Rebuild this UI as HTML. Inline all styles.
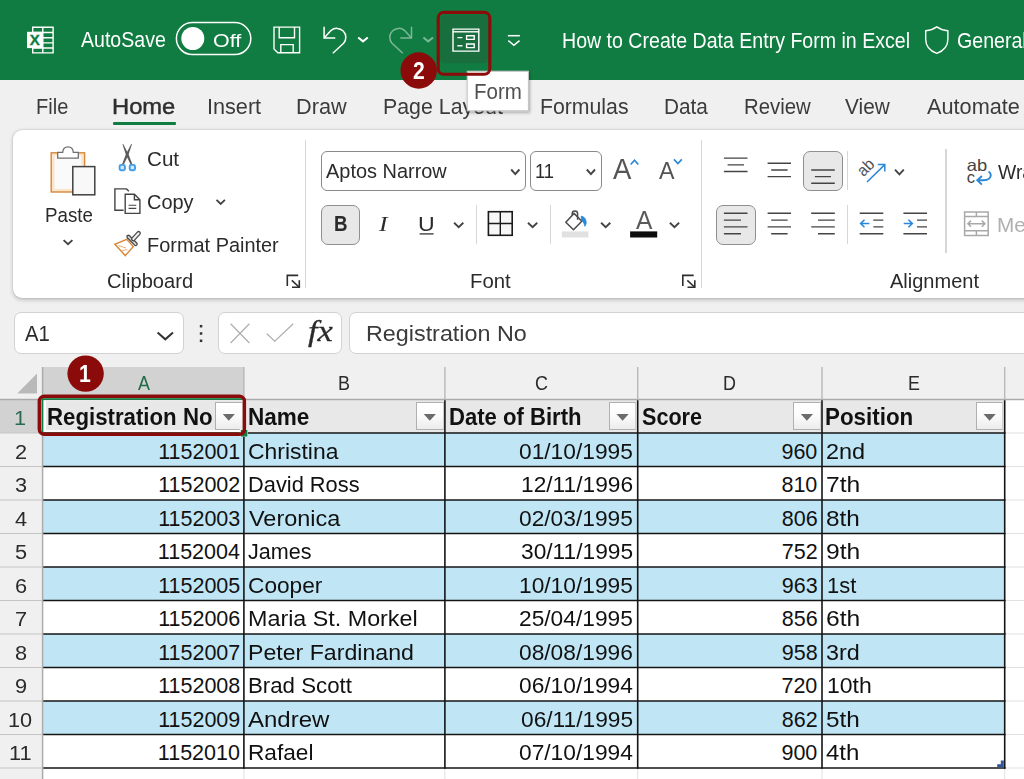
<!DOCTYPE html>
<html lang="en">
<head>
<meta charset="utf-8">
<title>How to Create Data Entry Form in Excel</title>
<style>

html,body{margin:0;padding:0;width:1024px;height:779px;overflow:hidden}
body{background:#f0f0f0;font-family:'Liberation Sans',sans-serif;}
#app{position:relative;width:1024px;height:779px;overflow:hidden;background:#f0f0f0;color:#242424}
#app div{position:absolute;box-sizing:border-box}
#app svg{position:absolute;left:0;top:0;overflow:visible}
.t{position:absolute;white-space:pre;line-height:1;transform-origin:0 0}
#titlebar{left:0;top:0;width:1024px;height:80px;background:#107c41}
#ribbon{left:13.2px;top:130px;width:1040px;height:168px;background:#fff;border-radius:9px;box-shadow:0 1.5px 4px rgba(0,0,0,.2),0 0 1.5px rgba(0,0,0,.22)}
.fbox{background:#fff;border:1.5px solid #d2d2d2;border-radius:7px}
.combo{background:#fff;border:1px solid #8a8a8a;border-radius:6px}
.pressed{background:#e8e8e8;border:1px solid #8f8f8f;border-radius:7px}
.vsep{background:#d6d6d6}
.cell{background:#fff}
.band{background:#c0e6f5}
.hcell{background:#e8e8e8}
.fbtn{border:1.3px solid #b0b0b0;border-right-color:#d0d0d0;background:linear-gradient(#ffffff 0%,#fbfbfb 50%,#ececec 100%);}

</style>
</head>
<body>
<div id="app">
<div id="titlebar"></div>
<div id="ribbon"></div>
<div style="left:112.5px;top:122.4px;width:63.3px;height:2.2px;background:#107c41;border-radius:1px"></div>
<div class="combo" style="left:320.5px;top:150.5px;width:205.5px;height:40px;"></div>
<div class="combo" style="left:530px;top:150.5px;width:71.5px;height:40px;"></div>
<div class="pressed" style="left:320.5px;top:204.5px;width:39.5px;height:40px;"></div>
<div class="pressed" style="left:715.5px;top:204.5px;width:40.5px;height:40px;"></div>
<div class="pressed" style="left:803px;top:150.5px;width:40px;height:40px;"></div>
<div class="vsep" style="left:305.1px;top:139.5px;width:1.4px;height:148.3px;"></div>
<div class="vsep" style="left:700.7px;top:139.5px;width:1.4px;height:148.3px;"></div>
<div class="vsep" style="left:475.9px;top:204.8px;width:1.3px;height:39.4px;"></div>
<div class="vsep" style="left:550px;top:204.8px;width:1.3px;height:39.4px;"></div>
<div class="vsep" style="left:846.5px;top:150.8px;width:1.3px;height:39.6px;"></div>
<div class="vsep" style="left:846.5px;top:204.8px;width:1.3px;height:39.4px;"></div>
<div class="vsep" style="left:945.3px;top:149.3px;width:1.3px;height:103.3px;"></div>
<div class="fbox" style="left:14.3px;top:312px;width:169.5px;height:42.4px;"></div>
<div class="fbox" style="left:218.3px;top:312px;width:123.3px;height:42.4px;"></div>
<div class="fbox" style="left:348.9px;top:312px;width:711.1px;height:42.4px;"></div>
<div style="left:0px;top:367px;width:1024px;height:32px;background:#f0f0f0"></div>
<div style="left:42.6px;top:367px;width:201.3px;height:32px;background:#d2d2d2"></div>
<div style="left:0px;top:399.5px;width:42.6px;height:33.5px;background:#d2d2d2"></div>
<div style="left:42.6px;top:399.5px;width:981.4px;height:379.5px;background:#fff"></div>
<div class="hcell" style="left:42.6px;top:399.5px;width:962.1px;height:33.5px;"></div>
<div style="left:43px;top:399.6px;width:201.6px;height:33.8px;background:#fff"></div>
<div style="left:45.5px;top:401.3px;width:197.1px;height:29.2px;background:#e8e8e8"></div>
<div class="band" style="left:42.6px;top:433px;width:962.1px;height:33.5px;"></div>
<div class="band" style="left:42.6px;top:500px;width:962.1px;height:33.5px;"></div>
<div class="band" style="left:42.6px;top:567px;width:962.1px;height:33.5px;"></div>
<div class="band" style="left:42.6px;top:634px;width:962.1px;height:33.5px;"></div>
<div class="band" style="left:42.6px;top:701px;width:962.1px;height:33.5px;"></div>
<div class="fbtn" style="left:215px;top:402.2px;width:27.6px;height:28.3px;"></div>
<div class="fbtn" style="left:416px;top:402.2px;width:27.6px;height:28.3px;"></div>
<div class="fbtn" style="left:608.8px;top:402.2px;width:27.6px;height:28.3px;"></div>
<div class="fbtn" style="left:793.1px;top:402.2px;width:27.6px;height:28.3px;"></div>
<div class="fbtn" style="left:975.8px;top:402.2px;width:27.6px;height:28.3px;"></div>
<svg id="ico" width="1024" height="779" viewBox="0 0 1024 779">
<line x1="1004.7" y1="399.5" x2="1024" y2="399.5" stroke="#e1e1e1" stroke-width="1" />
<line x1="1004.7" y1="433" x2="1024" y2="433" stroke="#e1e1e1" stroke-width="1" />
<line x1="1004.7" y1="466.5" x2="1024" y2="466.5" stroke="#e1e1e1" stroke-width="1" />
<line x1="1004.7" y1="500" x2="1024" y2="500" stroke="#e1e1e1" stroke-width="1" />
<line x1="1004.7" y1="533.5" x2="1024" y2="533.5" stroke="#e1e1e1" stroke-width="1" />
<line x1="1004.7" y1="567" x2="1024" y2="567" stroke="#e1e1e1" stroke-width="1" />
<line x1="1004.7" y1="600.5" x2="1024" y2="600.5" stroke="#e1e1e1" stroke-width="1" />
<line x1="1004.7" y1="634" x2="1024" y2="634" stroke="#e1e1e1" stroke-width="1" />
<line x1="1004.7" y1="667.5" x2="1024" y2="667.5" stroke="#e1e1e1" stroke-width="1" />
<line x1="1004.7" y1="701" x2="1024" y2="701" stroke="#e1e1e1" stroke-width="1" />
<line x1="1004.7" y1="734.5" x2="1024" y2="734.5" stroke="#e1e1e1" stroke-width="1" />
<line x1="1004.7" y1="768" x2="1024" y2="768" stroke="#e1e1e1" stroke-width="1" />
<line x1="1004.7" y1="768" x2="1004.7" y2="779" stroke="#e1e1e1" stroke-width="1" />
<line x1="42.6" y1="768" x2="42.6" y2="779" stroke="#e1e1e1" stroke-width="1" />
<line x1="243.9" y1="768" x2="243.9" y2="779" stroke="#e1e1e1" stroke-width="1" />
<line x1="444.9" y1="768" x2="444.9" y2="779" stroke="#e1e1e1" stroke-width="1" />
<line x1="637.7" y1="768" x2="637.7" y2="779" stroke="#e1e1e1" stroke-width="1" />
<line x1="822" y1="768" x2="822" y2="779" stroke="#e1e1e1" stroke-width="1" />
<line x1="0" y1="433" x2="42.6" y2="433" stroke="#c4c4c4" stroke-width="1.2" />
<line x1="0" y1="466.5" x2="42.6" y2="466.5" stroke="#c4c4c4" stroke-width="1.2" />
<line x1="0" y1="500" x2="42.6" y2="500" stroke="#c4c4c4" stroke-width="1.2" />
<line x1="0" y1="533.5" x2="42.6" y2="533.5" stroke="#c4c4c4" stroke-width="1.2" />
<line x1="0" y1="567" x2="42.6" y2="567" stroke="#c4c4c4" stroke-width="1.2" />
<line x1="0" y1="600.5" x2="42.6" y2="600.5" stroke="#c4c4c4" stroke-width="1.2" />
<line x1="0" y1="634" x2="42.6" y2="634" stroke="#c4c4c4" stroke-width="1.2" />
<line x1="0" y1="667.5" x2="42.6" y2="667.5" stroke="#c4c4c4" stroke-width="1.2" />
<line x1="0" y1="701" x2="42.6" y2="701" stroke="#c4c4c4" stroke-width="1.2" />
<line x1="0" y1="734.5" x2="42.6" y2="734.5" stroke="#c4c4c4" stroke-width="1.2" />
<line x1="0" y1="768" x2="42.6" y2="768" stroke="#c4c4c4" stroke-width="1.2" />
<line x1="42.6" y1="367" x2="42.6" y2="779" stroke="#ababab" stroke-width="1.5" />
<line x1="243.9" y1="367" x2="243.9" y2="399" stroke="#b8b8b8" stroke-width="1.4" />
<line x1="444.9" y1="367" x2="444.9" y2="399" stroke="#b8b8b8" stroke-width="1.4" />
<line x1="637.7" y1="367" x2="637.7" y2="399" stroke="#b8b8b8" stroke-width="1.4" />
<line x1="822" y1="367" x2="822" y2="399" stroke="#b8b8b8" stroke-width="1.4" />
<line x1="1004.7" y1="367" x2="1004.7" y2="399" stroke="#b8b8b8" stroke-width="1.4" />
<line x1="0" y1="399.5" x2="1024" y2="399.5" stroke="#aaaaaa" stroke-width="1.5" />
<line x1="43.3" y1="433" x2="1005.5" y2="433" stroke="#151515" stroke-width="1.6" />
<line x1="43.3" y1="466.5" x2="1005.5" y2="466.5" stroke="#151515" stroke-width="1.6" />
<line x1="43.3" y1="500" x2="1005.5" y2="500" stroke="#151515" stroke-width="1.6" />
<line x1="43.3" y1="533.5" x2="1005.5" y2="533.5" stroke="#151515" stroke-width="1.6" />
<line x1="43.3" y1="567" x2="1005.5" y2="567" stroke="#151515" stroke-width="1.6" />
<line x1="43.3" y1="600.5" x2="1005.5" y2="600.5" stroke="#151515" stroke-width="1.6" />
<line x1="43.3" y1="634" x2="1005.5" y2="634" stroke="#151515" stroke-width="1.6" />
<line x1="43.3" y1="667.5" x2="1005.5" y2="667.5" stroke="#151515" stroke-width="1.6" />
<line x1="43.3" y1="701" x2="1005.5" y2="701" stroke="#151515" stroke-width="1.6" />
<line x1="43.3" y1="734.5" x2="1005.5" y2="734.5" stroke="#151515" stroke-width="1.6" />
<line x1="43.3" y1="768" x2="1005.5" y2="768" stroke="#151515" stroke-width="1.6" />
<line x1="243.9" y1="400.2" x2="243.9" y2="768.8" stroke="#151515" stroke-width="1.6" />
<line x1="444.9" y1="400.2" x2="444.9" y2="768.8" stroke="#151515" stroke-width="1.6" />
<line x1="637.7" y1="400.2" x2="637.7" y2="768.8" stroke="#151515" stroke-width="1.6" />
<line x1="822" y1="400.2" x2="822" y2="768.8" stroke="#151515" stroke-width="1.6" />
<line x1="1004.7" y1="400.2" x2="1004.7" y2="768.8" stroke="#151515" stroke-width="1.6" />
<path d="M1003.8 760.6v6.6h-6.6v-3h3.6v-3.6z" fill="#2f5597"/>
<path d="M37 373.4V393.4H17.2z" fill="#b9b9b9"/>
<path d="M222.7 413.9h12.2l-6.1 6.9z" fill="#6b6b6b"/>
<path d="M423.7 413.9h12.2l-6.1 6.9z" fill="#6b6b6b"/>
<path d="M616.5 413.9h12.2l-6.1 6.9z" fill="#6b6b6b"/>
<path d="M800.8 413.9h12.2l-6.1 6.9z" fill="#6b6b6b"/>
<path d="M983.5 413.9h12.2l-6.1 6.9z" fill="#6b6b6b"/>
<rect x="440.2" y="14.6" width="48.4" height="48.6" rx="5" fill="#186f3d"/>
<g fill="none" stroke="#fff" stroke-width="1.4"><path d="M32.7 27.3h20.4v25.6H32.7z" /><path d="M42.8 27.3v25.6" /><path d="M32.7 32.5h20.4M42.8 37.7h10.3M42.8 42.9h10.3M32.7 48h20.4" /></g>
<rect x="27" y="31.8" width="15.7" height="16.3" fill="#fff"/>
<text x="34.85" y="45.1" font-family="'Liberation Sans',sans-serif" font-size="15" font-weight="700" fill="#107c41" stroke="#107c41" stroke-width="0.4" text-anchor="middle">X</text>
<rect x="176.4" y="22.5" width="74.4" height="32.1" rx="16.05" fill="none" stroke="#fff" stroke-width="1.5"/>
<circle cx="192.8" cy="38.5" r="11.5" fill="#fff"/>
<g fill="none" stroke="#fff" stroke-width="1.4"><path d="M274 27.1h25.6v25.6h-21.8l-3.8-3.8z" /><path d="M279.2 27.1v10.7h15.3V27.1" /><path d="M280.8 52.7v-8.1h12.4v8.1" /></g>
<g fill="none" stroke="#fff" stroke-width="1.5" opacity="1"><path d="M324.1 26.8V38h11.2" /><path d="M324.4 37.7L330.9 30.6A9 9 0 0 1 343.6 43.3L332.8 53.2" /></g>
<path d="M358.2 37.5L363 41.4L367.8 37.5" fill="none" stroke="#fff" stroke-width="2.0" stroke-linejoin="miter"/>
<g fill="none" stroke="#fff" stroke-width="1.5" opacity="0.45" transform="translate(735.6 0) scale(-1 1)"><path d="M324.1 26.8V38h11.2" /><path d="M324.4 37.7L330.9 30.6A9 9 0 0 1 343.6 43.3L332.8 53.2" /></g>
<path d="M423.4 37.5L428.2 41.4L433 37.5" fill="none" stroke="#fff" stroke-width="2.0" stroke-linejoin="miter" opacity="0.45"/>
<g fill="none" stroke="#fff" stroke-width="1.4"><path d="M453 29.1h25.8v22H453z" /><path d="M453 31.8h25.8" /><path d="M457.4 37.6h5M457.4 45.8h5" /><path d="M466.6 35.8h7.6v3.6h-7.6zM466.6 44h7.6v3.6h-7.6z" /></g>
<g fill="none" stroke="#fff" stroke-width="1.5"><path d="M507.9 35.7h12" /><path d="M508.3 40.6l5.6 4.7 5.6-4.7" /></g>
<g fill="none" stroke="#fff" stroke-width="1.4"><path d="M936.8 26.9c-3.4 2.5-7.1 3.6-11.1 3.9v8.4c0 7.2 4.4 11.7 11.1 14.2 6.7-2.5 11.1-7 11.1-14.2v-8.4c-4-.3-7.7-1.4-11.1-3.9z" /></g>
<rect x="51.2" y="152.8" width="33.4" height="39.2" fill="#fbe5cb" stroke="#d8873a" stroke-width="1.4"/>
<rect x="54.6" y="156" width="26.6" height="32.8" fill="#fafafa"/>
<path d="M57.7 158.1v-5.7h5c.2-3.4 2.300-5.500 5.300-5.500s5.100 2.100 5.300 5.500h5v5.700z" fill="#fff" stroke="#707070" stroke-width="1.3"/>
<rect x="72.8" y="166.6" width="22" height="28.2" fill="#f8f8f8" stroke="#404040" stroke-width="1.5"/>
<path d="M63.6 240.1L68 244.1L72.4 240.1" fill="none" stroke="#444" stroke-width="1.9" stroke-linejoin="miter"/>
<path d="M123.17 144.04L128.39 153.89L132.34 164.28L130.86 164.92L126.01 154.91L122.43 144.36z" fill="#5a5a5a"/><path d="M131.23 144.04L126.01 153.89L122.06 164.28L123.54 164.92L128.39 154.91L131.97 144.36z" fill="#5a5a5a"/>
<rect x="119.6" y="164.9" width="5.300" height="5.300" rx="1.500" fill="#d3e8f9" stroke="#419de6" stroke-width="1.900"/>
<rect x="129.700" y="164.9" width="5.300" height="5.300" rx="1.500" fill="#d3e8f9" stroke="#419de6" stroke-width="1.900"/>
<g fill="none" stroke="#444" stroke-width="1.4"><path d="M123.6 210.2h-8.700V188.9h11.6l2.400 2.400" /><path d="M125.2 194.2h9.2l5.500 5.500v13.700h-14.700z" fill="#fff"/><path d="M134.400 194.2v5.500h5.500" /><path d="M128.600 205.3h7.700M128.600 208.4h7.700" stroke-width="1.1"/></g>
<path d="M216.5 199.9L220.7 204L224.9 199.9" fill="none" stroke="#444" stroke-width="1.9" stroke-linejoin="miter"/>
<g ><path d="M126.7 239.3l-11.900 5 10.500 11.300 8-9.200z" fill="#fff" stroke="#d8873a" stroke-width="1.4"/><path d="M118.500 245.5l7.500 2.600M121.900 250.800l5.500-1.300" fill="none" stroke="#e9b585" stroke-width="1.1"/><path d="M128.400 236.8l7.300 7.300" fill="none" stroke="#4a4a4a" stroke-width="4.2" stroke-linecap="round"/><path d="M128.400 236.8l7.300 7.300" fill="none" stroke="#d9d9d9" stroke-width="1.6" stroke-linecap="round"/><path d="M133.300 239l5.300-5.700" fill="none" stroke="#4a4a4a" stroke-width="4.600" stroke-linecap="round"/><path d="M133.300 239l5.300-5.700" fill="none" stroke="#f2f2f2" stroke-width="2" stroke-linecap="round"/></g>
<g fill="none" stroke="#2e2e2e" stroke-width="1.6"><path d="M298.2 275.4H287.3V286" /><path d="M291.8 280.4L299 287" /><path d="M299.3 280.2V287.2H292" /></g>
<g fill="none" stroke="#2e2e2e" stroke-width="1.6"><path d="M693.7 275.4H682.8V286" /><path d="M687.3 280.4L694.5 287" /><path d="M694.8 280.2V287.2H687.5" /></g>
<path d="M511.2 169.5L515.3 174.1L519.4 169.5" fill="none" stroke="#444" stroke-width="1.9" stroke-linejoin="miter"/>
<path d="M586.8 169.5L590.9 174.1L595 169.5" fill="none" stroke="#444" stroke-width="1.9" stroke-linejoin="miter"/>
<path d="M454.1 222.7L458.7 227.1L463.3 222.7" fill="none" stroke="#444" stroke-width="1.9" stroke-linejoin="miter"/>
<path d="M528 222.7L532.6 227.1L537.2 222.7" fill="none" stroke="#444" stroke-width="1.9" stroke-linejoin="miter"/>
<path d="M601.1 222.7L605.7 227.1L610.3 222.7" fill="none" stroke="#444" stroke-width="1.9" stroke-linejoin="miter"/>
<path d="M669.9 222.7L674.5 227.1L679.1 222.7" fill="none" stroke="#444" stroke-width="1.9" stroke-linejoin="miter"/>
<rect x="419.6" y="233.2" width="14" height="1.4" fill="#444"/>
<rect x="488.4" y="211.7" width="23.8" height="23.6" fill="#f7f7f7" stroke="#1a1a1a" stroke-width="1.6"/>
<path d="M500.3 211.7v23.600M488.400 223.5h23.800" fill="none" stroke="#1a1a1a" stroke-width="1.4"/>
<path d="M630.7 164.5l3.800-4.200 3.800 4.200" fill="none" stroke="#2b88d8" stroke-width="1.7"/>
<path d="M674 159.3l3.900 4.200 3.900-4.200" fill="none" stroke="#2b88d8" stroke-width="1.7"/>
<rect x="561.8" y="231.4" width="26.6" height="6.1" fill="#e1e1e1"/>
<g fill="none" stroke="#4a4a4a" stroke-width="1.5" stroke-linejoin="round"><path d="M565.8 222.3L573.5 229.8L581.8 221.3L574 213.4Z" fill="#fff"/><path d="M572.2 215.2v-1.600c0-1.700 1.200-2.700 2.700-2.700s2.700 1 2.700 2.700v6.200" /></g>
<path d="M581.2 216.100c2.700.500 4.500 2.500 4.900 5.200.3 2-.200 3.600-1.300 5-.400-2.700-1.500-4.700-3.400-6.100z" fill="#2b88d8" stroke="#2b88d8" stroke-width=".8" stroke-linejoin="round"/>
<rect x="630.1" y="231.4" width="27.1" height="6.1" fill="#0d0d0d"/>
<path d="M723.9 158.1H747.5M727.6 164.9H744M723.9 171.5H747.5" fill="none" stroke="#444" stroke-width="1.4"/>
<path d="M767.6 163.2H791M771.2 170H787.6M767.6 176.6H791" fill="none" stroke="#444" stroke-width="1.4"/>
<path d="M811.2 170H834.8M814.9 176.6H831M811.2 183.3H834.8" fill="none" stroke="#444" stroke-width="1.4"/>
<path d="M723.9 213.3H747.5M723.9 220.1H741M723.9 226.9H747.5M723.9 233.7H741" fill="none" stroke="#444" stroke-width="1.4"/>
<path d="M767.6 213.3H791M771.2 220.1H787.6M767.6 226.9H791M771.2 233.7H787.6" fill="none" stroke="#444" stroke-width="1.4"/>
<path d="M811.2 213.3H834.8M818 220.1H834.8M811.2 226.9H834.8M818 233.7H834.8" fill="none" stroke="#444" stroke-width="1.4"/>
<text transform="translate(863.6 177.2) rotate(-45)" font-family="'Liberation Sans',sans-serif" font-size="16.5" fill="#505050" textLength="17" lengthAdjust="spacingAndGlyphs">ab</text>
<path d="M867 182l17.300-16.900M877.800 164.500h7v7" fill="none" stroke="#2b88d8" stroke-width="1.5"/>
<path d="M895 169.7L899.4 174.3L903.8 169.7" fill="none" stroke="#444" stroke-width="1.9" stroke-linejoin="miter"/>
<path d="M859.7 213.3H883.3M873.3 220.1H883.3M873.3 226.9H883.3M859.7 233.7H883.3" fill="none" stroke="#444" stroke-width="1.4"/>
<path d="M869.4 223.5h-8.600M864.500 219.700l-3.900 3.800 3.900 3.800" fill="none" stroke="#2b88d8" stroke-width="1.6"/>
<path d="M903.4 213.3H927M917 220.1H927M917 226.9H927M903.4 233.7H927" fill="none" stroke="#444" stroke-width="1.4"/>
<path d="M903.700 223.5h8.600M908.400 219.700l3.900 3.800-3.900 3.800" fill="none" stroke="#2b88d8" stroke-width="1.6"/>
<text x="966.8" y="170.6" font-family="'Liberation Sans',sans-serif" font-size="16.5" fill="#444" textLength="20.4" lengthAdjust="spacingAndGlyphs">ab</text>
<text x="966.8" y="182.6" font-family="'Liberation Sans',sans-serif" font-size="16.5" fill="#444">c</text>
<path d="M988.6 171.500c2.700 1.700 2.900 5.100.6 7.100-1.400 1.200-3.300 1.700-6.200 1.700h-5.400M981.900 176l-4.600 4.300 4.600 4.300" fill="none" stroke="#2b88d8" stroke-width="1.9"/>
<g fill="none" stroke="#a8a8a8" stroke-width="1.5"><path d="M964.6 212.100h23.600v23.300h-23.600z" /><path d="M964.6 216.600h23.600M964.600 230.800h23.600M976.400 212.100v4.500M976.400 230.800v4.600" /><path d="M968 223.700h16.800M971 220.600l-3.100 3.100 3.100 3.100M981.800 220.600l3.100 3.100-3.100 3.100" /></g>
<path d="M157.6 332.5L165.3 339.3L173 332.5" fill="none" stroke="#333" stroke-width="2.0" stroke-linejoin="miter"/>
<rect x="199.8" y="324.95" width="2.5" height="2.5" fill="#333"/>
<rect x="199.8" y="332.25" width="2.5" height="2.5" fill="#333"/>
<rect x="199.8" y="339.55" width="2.5" height="2.5" fill="#333"/>
<path d="M230.6 323.800l18.800 19.200M249.400 323.800l-18.800 19.200" fill="none" stroke="#b0b0b0" stroke-width="1.3"/>
<path d="M266.800 333.800l8 7.400 18.400-17.400" fill="none" stroke="#b0b0b0" stroke-width="1.3"/>
<rect x="42.4" y="399.1" width="202.2" height="34.5" fill="none" stroke="#107c41" stroke-width="1.7"/>
<rect x="239.8" y="428.8" width="8" height="8" fill="#fff"/><rect x="240.8" y="429.8" width="6.6" height="6.8" fill="#107c41"/>
</svg>
<span class="t" style="left:80.50px;top:30.00px;font-size:21.5px;color:#ffffff;transform:scaleX(0.9095);">AutoSave</span>
<span class="t" style="left:212.99px;top:32.00px;font-size:18.8px;color:#ffffff;transform:scaleX(1.1416);">Off</span>
<span class="t" style="left:562.27px;top:31.00px;font-size:21.5px;color:#ffffff;transform:scaleX(0.9102);">How to Create Data Entry Form in Excel</span>
<span class="t" style="left:957.08px;top:31.00px;font-size:21.5px;color:#ffffff;transform:scaleX(0.9114);">General</span>
<span class="t" style="left:36.44px;top:96.00px;font-size:22.5px;color:#3b3b3b;transform:scaleX(0.8903);">File</span>
<span class="t" style="left:111.90px;top:96.00px;font-size:22.5px;color:#2e2e2e;transform:scaleX(1.0550);-webkit-text-stroke:0.45px #2e2e2e;">Home</span>
<span class="t" style="left:206.81px;top:96.00px;font-size:22.5px;color:#3b3b3b;transform:scaleX(0.9617);">Insert</span>
<span class="t" style="left:295.55px;top:96.00px;font-size:22.5px;color:#3b3b3b;transform:scaleX(0.9653);">Draw</span>
<span class="t" style="left:383.08px;top:96.00px;font-size:22.5px;color:#3b3b3b;transform:scaleX(0.9485);">Page Layout</span>
<span class="t" style="left:539.74px;top:96.00px;font-size:22.5px;color:#3b3b3b;transform:scaleX(0.9441);">Formulas</span>
<span class="t" style="left:664.18px;top:96.00px;font-size:22.5px;color:#3b3b3b;transform:scaleX(0.9235);">Data</span>
<span class="t" style="left:744.21px;top:96.00px;font-size:22.5px;color:#3b3b3b;transform:scaleX(0.9047);">Review</span>
<span class="t" style="left:845.00px;top:96.00px;font-size:22.5px;color:#3b3b3b;transform:scaleX(0.9252);">View</span>
<span class="t" style="left:927.00px;top:96.00px;font-size:22.5px;color:#3b3b3b;transform:scaleX(0.9644);">Automate</span>
<span class="t" style="left:45.34px;top:205.00px;font-size:20.5px;color:#2b2b2b;transform:scaleX(0.9142);">Paste</span>
<span class="t" style="left:147.43px;top:149.00px;font-size:20.5px;color:#2b2b2b;transform:scaleX(1.0061);">Cut</span>
<span class="t" style="left:147.47px;top:192.00px;font-size:20.5px;color:#2b2b2b;transform:scaleX(0.9724);">Copy</span>
<span class="t" style="left:146.84px;top:235.00px;font-size:20.5px;color:#2b2b2b;transform:scaleX(0.9718);">Format Painter</span>
<span class="t" style="left:107.06px;top:271.00px;font-size:20.5px;color:#2b2b2b;transform:scaleX(0.9809);">Clipboard</span>
<span class="t" style="left:470.21px;top:271.00px;font-size:20.5px;color:#2b2b2b;transform:scaleX(0.9927);">Font</span>
<span class="t" style="left:890.00px;top:271.00px;font-size:20.5px;color:#2b2b2b;transform:scaleX(0.9756);">Alignment</span>
<span class="t" style="left:326.00px;top:161.00px;font-size:20.5px;color:#2b2b2b;transform:scaleX(0.9724);">Aptos Narrow</span>
<span class="t" style="left:534.85px;top:161.00px;font-size:20.5px;color:#2b2b2b;transform:scaleX(0.8973);">11</span>
<span class="t" style="left:333.63px;top:214.00px;font-size:21.5px;font-weight:700;color:#2b2b2b;transform:scaleX(0.8707);">B</span>
<span class="t" style="left:378.90px;top:213.00px;font-size:22px;font-style:italic;color:#2b2b2b;font-family:'Liberation Serif',serif;transform:scaleX(1.1636);">I</span>
<span class="t" style="left:418.36px;top:213.00px;font-size:21px;color:#2b2b2b;transform:scaleX(1.0987);">U</span>
<span class="t" style="left:613.30px;top:154.00px;font-size:29.5px;color:#555;transform:scaleX(0.9334);">A</span>
<span class="t" style="left:659.30px;top:159.00px;font-size:24px;color:#555;transform:scaleX(0.9674);">A</span>
<span class="t" style="left:635.80px;top:207.00px;font-size:26px;color:#5a5a5a;transform:scaleX(0.9445);">A</span>
<span class="t" style="left:997.60px;top:162.00px;font-size:20.5px;color:#2b2b2b;transform:scaleX(0.9419);">Wrap</span>
<span class="t" style="left:997.18px;top:215.00px;font-size:20.5px;color:#b0b0b0;transform:scaleX(1.0094);">Merge</span>
<span class="t" style="left:24.80px;top:323.00px;font-size:22.5px;color:#2b2b2b;transform:scaleX(0.9020);">A1</span>
<span class="t" style="left:366.18px;top:323.00px;font-size:22.5px;color:#3b3b3b;transform:scaleX(1.0367);">Registration No</span>
<span class="t" style="left:308.20px;top:317.00px;font-size:29px;font-style:italic;color:#2b2b2b;font-family:'Liberation Serif',serif;transform:scaleX(1.1858);-webkit-text-stroke:0.3px #2b2b2b;">fx</span>
<span class="t" style="left:138.07px;top:374.00px;font-size:19.5px;color:#1e6b47;transform:scaleX(0.9200);">A</span>
<span class="t" style="left:338.19px;top:374.00px;font-size:19.5px;color:#2b2b2b;transform:scaleX(0.9200);">B</span>
<span class="t" style="left:535.21px;top:374.00px;font-size:19.5px;color:#2b2b2b;transform:scaleX(0.9200);">C</span>
<span class="t" style="left:723.33px;top:374.00px;font-size:19.5px;color:#2b2b2b;transform:scaleX(0.9200);">D</span>
<span class="t" style="left:907.99px;top:374.00px;font-size:19.5px;color:#2b2b2b;transform:scaleX(0.9200);">E</span>
<span class="t" style="left:13.62px;top:408.00px;font-size:20.5px;color:#2a6b50;transform:scaleX(1.0600);">1</span>
<span class="t" style="left:14.59px;top:442.00px;font-size:20.5px;color:#2b2b2b;transform:scaleX(1.0600);">2</span>
<span class="t" style="left:14.76px;top:475.00px;font-size:20.5px;color:#2b2b2b;transform:scaleX(1.0600);">3</span>
<span class="t" style="left:14.76px;top:509.00px;font-size:20.5px;color:#2b2b2b;transform:scaleX(1.0600);">4</span>
<span class="t" style="left:14.76px;top:542.00px;font-size:20.5px;color:#2b2b2b;transform:scaleX(1.0600);">5</span>
<span class="t" style="left:14.59px;top:576.00px;font-size:20.5px;color:#2b2b2b;transform:scaleX(1.0600);">6</span>
<span class="t" style="left:14.59px;top:609.00px;font-size:20.5px;color:#2b2b2b;transform:scaleX(1.0600);">7</span>
<span class="t" style="left:14.76px;top:643.00px;font-size:20.5px;color:#2b2b2b;transform:scaleX(1.0600);">8</span>
<span class="t" style="left:14.59px;top:676.00px;font-size:20.5px;color:#2b2b2b;transform:scaleX(1.0600);">9</span>
<span class="t" style="left:8.21px;top:710.00px;font-size:20.5px;color:#2b2b2b;transform:scaleX(1.0600);">10</span>
<span class="t" style="left:9.18px;top:743.00px;font-size:20.5px;color:#2b2b2b;transform:scaleX(1.0600);">11</span>
<span class="t" style="left:46.81px;top:406.00px;font-size:23px;font-weight:700;color:#111111;transform:scaleX(0.9666);">Registration No</span>
<span class="t" style="left:247.99px;top:406.00px;font-size:23px;font-weight:700;color:#111111;transform:scaleX(0.9797);">Name</span>
<span class="t" style="left:448.52px;top:406.00px;font-size:23px;font-weight:700;color:#111111;transform:scaleX(0.9605);">Date of Birth</span>
<span class="t" style="left:641.56px;top:406.00px;font-size:23px;font-weight:700;color:#111111;transform:scaleX(0.9382);">Score</span>
<span class="t" style="left:825.30px;top:406.00px;font-size:23px;font-weight:700;color:#111111;transform:scaleX(0.9731);">Position</span>
<span class="t" style="left:158.17px;top:442.00px;font-size:21.5px;color:#111111;">1152001</span>
<span class="t" style="left:248.23px;top:442.00px;font-size:21.5px;color:#111111;transform:scaleX(1.0659);">Christina</span>
<span class="t" style="left:519.48px;top:442.00px;font-size:21.5px;color:#111111;transform:scaleX(1.0580);">01/10/1995</span>
<span class="t" style="left:781.46px;top:442.00px;font-size:21.5px;color:#111111;">960</span>
<span class="t" style="left:825.70px;top:442.00px;font-size:21.5px;color:#111111;transform:scaleX(1.0904);">2nd</span>
<span class="t" style="left:158.17px;top:475.00px;font-size:21.5px;color:#111111;">1152002</span>
<span class="t" style="left:247.59px;top:475.00px;font-size:21.5px;color:#111111;transform:scaleX(1.0151);">David Ross</span>
<span class="t" style="left:521.16px;top:475.00px;font-size:21.5px;color:#111111;transform:scaleX(1.0580);">12/11/1996</span>
<span class="t" style="left:781.46px;top:475.00px;font-size:21.5px;color:#111111;">810</span>
<span class="t" style="left:825.65px;top:475.00px;font-size:21.5px;color:#111111;transform:scaleX(1.1455);">7th</span>
<span class="t" style="left:158.17px;top:509.00px;font-size:21.5px;color:#111111;">1152003</span>
<span class="t" style="left:248.50px;top:509.00px;font-size:21.5px;color:#111111;transform:scaleX(1.0918);">Veronica</span>
<span class="t" style="left:519.48px;top:509.00px;font-size:21.5px;color:#111111;transform:scaleX(1.0580);">02/03/1995</span>
<span class="t" style="left:781.80px;top:509.00px;font-size:21.5px;color:#111111;">806</span>
<span class="t" style="left:826.04px;top:509.00px;font-size:21.5px;color:#111111;transform:scaleX(1.1318);">8th</span>
<span class="t" style="left:157.83px;top:542.00px;font-size:21.5px;color:#111111;">1152004</span>
<span class="t" style="left:248.16px;top:542.00px;font-size:21.5px;color:#111111;transform:scaleX(1.0029);">James</span>
<span class="t" style="left:521.16px;top:542.00px;font-size:21.5px;color:#111111;transform:scaleX(1.0580);">30/11/1995</span>
<span class="t" style="left:781.80px;top:542.00px;font-size:21.5px;color:#111111;">752</span>
<span class="t" style="left:825.65px;top:542.00px;font-size:21.5px;color:#111111;transform:scaleX(1.1455);">9th</span>
<span class="t" style="left:158.17px;top:576.00px;font-size:21.5px;color:#111111;">1152005</span>
<span class="t" style="left:248.24px;top:576.00px;font-size:21.5px;color:#111111;transform:scaleX(1.0547);">Cooper</span>
<span class="t" style="left:519.48px;top:576.00px;font-size:21.5px;color:#111111;transform:scaleX(1.0580);">10/10/1995</span>
<span class="t" style="left:781.80px;top:576.00px;font-size:21.5px;color:#111111;">963</span>
<span class="t" style="left:826.63px;top:576.00px;font-size:21.5px;color:#111111;transform:scaleX(1.0215);">1st</span>
<span class="t" style="left:158.17px;top:609.00px;font-size:21.5px;color:#111111;">1152006</span>
<span class="t" style="left:248.18px;top:609.00px;font-size:21.5px;color:#111111;transform:scaleX(1.0840);">Maria St. Morkel</span>
<span class="t" style="left:519.48px;top:609.00px;font-size:21.5px;color:#111111;transform:scaleX(1.0580);">25/04/1995</span>
<span class="t" style="left:781.80px;top:609.00px;font-size:21.5px;color:#111111;">856</span>
<span class="t" style="left:825.65px;top:609.00px;font-size:21.5px;color:#111111;transform:scaleX(1.1455);">6th</span>
<span class="t" style="left:158.17px;top:643.00px;font-size:21.5px;color:#111111;">1152007</span>
<span class="t" style="left:248.19px;top:643.00px;font-size:21.5px;color:#111111;transform:scaleX(1.0761);">Peter Fardinand</span>
<span class="t" style="left:519.48px;top:643.00px;font-size:21.5px;color:#111111;transform:scaleX(1.0580);">08/08/1996</span>
<span class="t" style="left:781.80px;top:643.00px;font-size:21.5px;color:#111111;">958</span>
<span class="t" style="left:826.07px;top:643.00px;font-size:21.5px;color:#111111;transform:scaleX(1.0858);">3rd</span>
<span class="t" style="left:158.17px;top:676.00px;font-size:21.5px;color:#111111;">1152008</span>
<span class="t" style="left:247.56px;top:676.00px;font-size:21.5px;color:#111111;transform:scaleX(1.0347);">Brad Scott</span>
<span class="t" style="left:519.12px;top:676.00px;font-size:21.5px;color:#111111;transform:scaleX(1.0580);">06/10/1994</span>
<span class="t" style="left:781.46px;top:676.00px;font-size:21.5px;color:#111111;">720</span>
<span class="t" style="left:826.56px;top:676.00px;font-size:21.5px;color:#111111;transform:scaleX(1.0689);">10th</span>
<span class="t" style="left:158.17px;top:710.00px;font-size:21.5px;color:#111111;">1152009</span>
<span class="t" style="left:248.30px;top:710.00px;font-size:21.5px;color:#111111;transform:scaleX(1.1167);">Andrew</span>
<span class="t" style="left:521.16px;top:710.00px;font-size:21.5px;color:#111111;transform:scaleX(1.0580);">06/11/1995</span>
<span class="t" style="left:781.80px;top:710.00px;font-size:21.5px;color:#111111;">862</span>
<span class="t" style="left:826.04px;top:710.00px;font-size:21.5px;color:#111111;transform:scaleX(1.1318);">5th</span>
<span class="t" style="left:157.83px;top:743.00px;font-size:21.5px;color:#111111;">1152010</span>
<span class="t" style="left:247.83px;top:743.00px;font-size:21.5px;color:#111111;transform:scaleX(1.0533);">Rafael</span>
<span class="t" style="left:519.12px;top:743.00px;font-size:21.5px;color:#111111;transform:scaleX(1.0580);">07/10/1994</span>
<span class="t" style="left:781.46px;top:743.00px;font-size:21.5px;color:#111111;">900</span>
<span class="t" style="left:826.42px;top:743.00px;font-size:21.5px;color:#111111;transform:scaleX(1.1184);">4th</span>
<svg id="ov" width="1024" height="779" viewBox="0 0 1024 779">
<defs><filter id="sh" x="-20%" y="-20%" width="150%" height="160%"><feDropShadow dx="1" dy="1.5" stdDeviation="1.6" flood-color="#000" flood-opacity=".32"/></filter></defs>
<rect x="467.2" y="71.2" width="61.2" height="39.6" fill="#fff" stroke="#c4c4c4" stroke-width="1" filter="url(#sh)"/>
<rect x="438.2" y="12.4" width="51.6" height="61.9" rx="5.5" fill="none" stroke="#8b0a0a" stroke-width="3.1"/>
<circle cx="418.7" cy="70.5" r="18.2" fill="#8b0a0a"/>
<rect x="39.3" y="396.2" width="205.1" height="38.1" rx="5" fill="none" stroke="#8b0a0a" stroke-width="3.4"/>
<circle cx="85.6" cy="373.6" r="18.2" fill="#8b0a0a"/>
</svg>
<span class="t" style="left:412.85px;top:60.00px;font-size:23.5px;font-weight:700;color:#ffffff;transform:scaleX(0.9000);">2</span>
<span class="t" style="left:78.62px;top:363.00px;font-size:23.5px;font-weight:700;color:#ffffff;transform:scaleX(0.9000);">1</span>
<span class="t" style="left:473.60px;top:82.00px;font-size:21.5px;color:#505050;transform:scaleX(0.9542);">Form</span>
</div>
</body>
</html>
